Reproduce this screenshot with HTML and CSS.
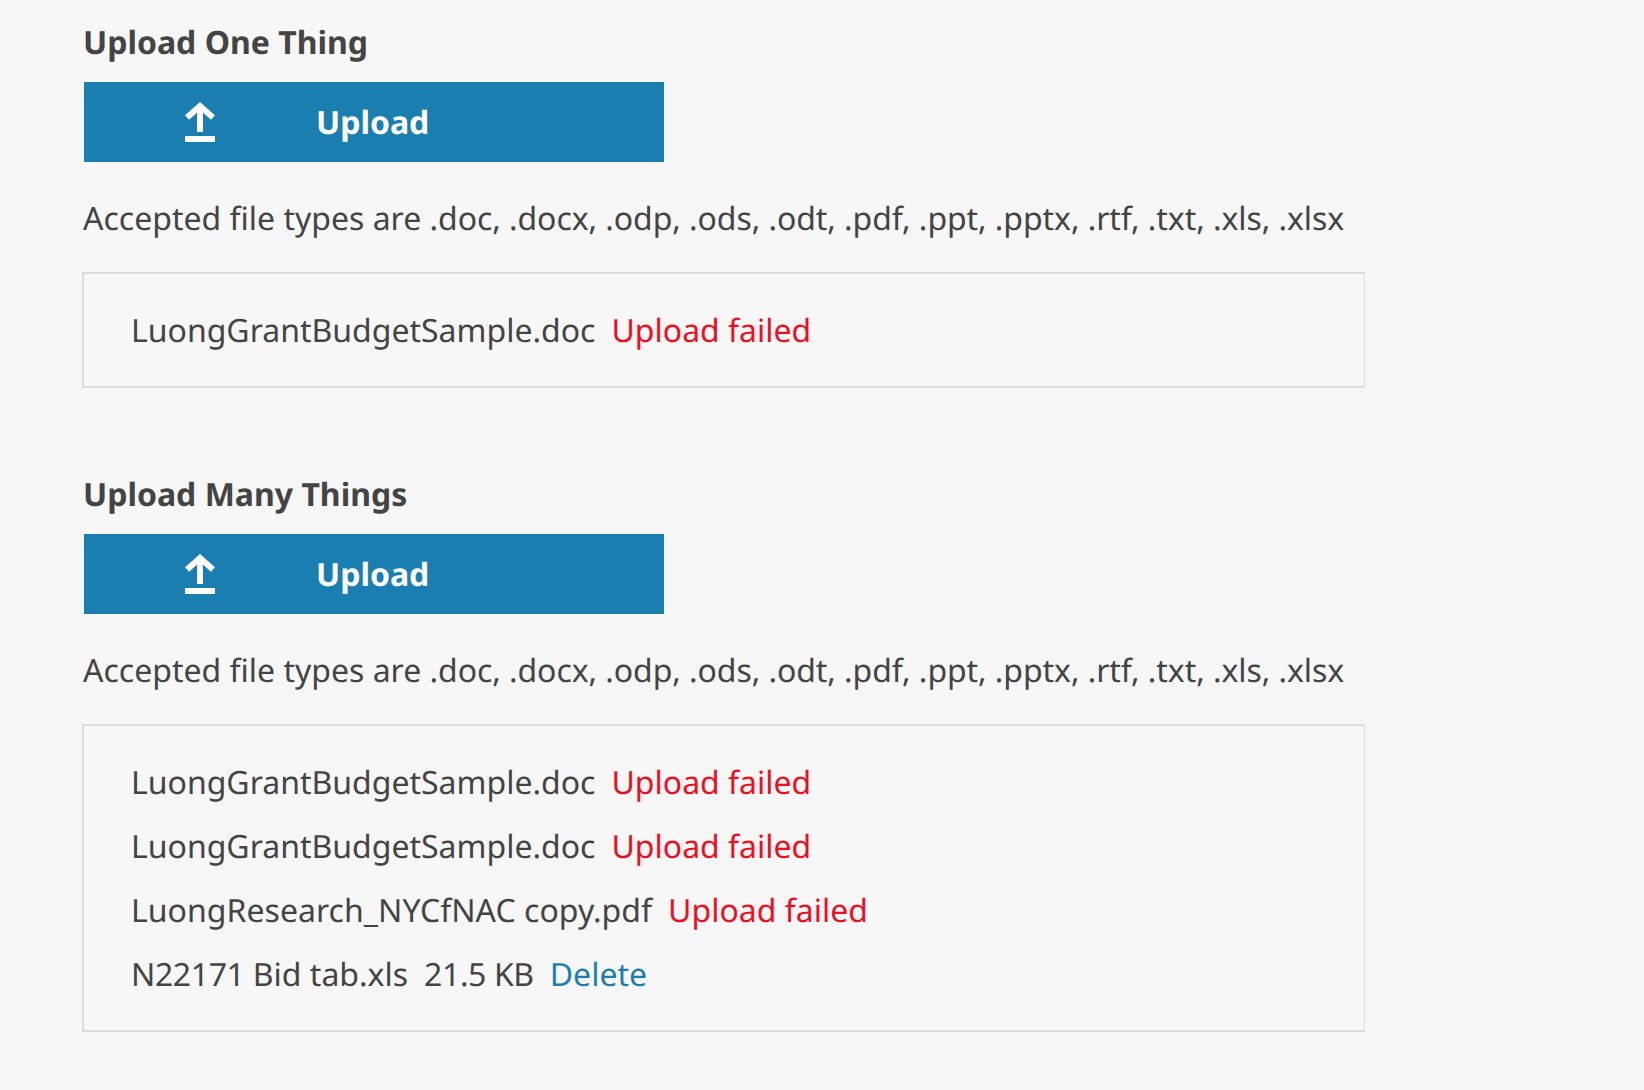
FILE: index.html
```html
<!DOCTYPE html>
<html>
<head>
<meta charset="UTF-8" /><title>Upload</title>
<link rel="stylesheet" href="styles.css">
</head>
<body>
<div class="section">
	<h2>Upload One Thing</h2>
	<div class="button">
		<svg class="icon" viewBox="0 0 30 40"><path d="M15 30V5M2 15.500L15 4l13 11.500M0 37h30" /></svg>
		<span>Upload</span>
	</div>
	<p>Accepted file types are <span class="types">.doc, .docx, .odp, .ods, .odt, .pdf, .ppt, .pptx, .rtf, .txt, .xls, .xlsx</span></p>
	<div class="files">
		<div class="file"><span>LuongGrantBudgetSample.doc</span><span class="failed">Upload failed</span></div>
	</div>
</div>
<div class="section">
	<h2>Upload Many Things</h2>
	<div class="button">
		<svg class="icon" viewBox="0 0 30 40"><path d="M15 30V5M2 15.500L15 4l13 11.500M0 37h30" /></svg>
		<span>Upload</span>
	</div>
	<p>Accepted file types are <span class="types">.doc, .docx, .odp, .ods, .odt, .pdf, .ppt, .pptx, .rtf, .txt, .xls, .xlsx</span></p>
	<div class="files">
		<div class="file"><span>LuongGrantBudgetSample.doc</span><span class="failed">Upload failed</span></div>
		<div class="file"><span>LuongGrantBudgetSample.doc</span><span class="failed">Upload failed</span></div>
		<div class="file"><span class="long">LuongResearch_NYCfNAC copy.pdf</span><span class="failed">Upload failed</span></div>
		<div class="file"><span><span class="num">N22171</span> Bid tab.xls</span><span class="num">21.5 KB</span><span class="delete">Delete</span></div>
	</div>
</div>
</body>
</html>
```
FILE: styles.css
```css
* {
	padding: 0px;
	margin: 0px;
	box-sizing: border-box;
}
body {
	font: 32px/64px "Noto Sans", sans-serif;
	text-rendering: geometricPrecision;
	color: #444;
	background: #f7f7f7;
	padding: 11px 0 0 83px;
	width: 1365px;
}
.section {
	margin-bottom: 75px;
}
h2 {
	font-size: 32px;
	font-weight: 700;
	line-height: 64px;
	margin-bottom: 7px;
}
.button {
	display: flex;
	align-items: center;
	width: 580px;
	height: 80px;
	margin-left: 1px;
	padding-left: 101px;
	background: #1a7eb0;
	color: #fff;
	font-weight: 700;
}
.button span {
	margin-left: 101px;
	padding-top: 2px;
}
.icon {
	width: 30px;
	height: 40px;
	fill: none;
	stroke: #fff;
	stroke-width: 6;
}
p {
	margin: 25px 0 21px;
}
.types {
	letter-spacing: -0.071px;
}
.files {
	border: 2px solid #ddd;
	padding: 25px 47px 23px;
	margin: 0 -1px;
}
.file {
	display: flex;
	gap: 16px;
}
.long {
	letter-spacing: 0.035px;
}
.num {
	letter-spacing: -0.4px;
}
.failed {
	color: #f20d1e;
}
.delete {
	color: #1a7eb0;
}
```
